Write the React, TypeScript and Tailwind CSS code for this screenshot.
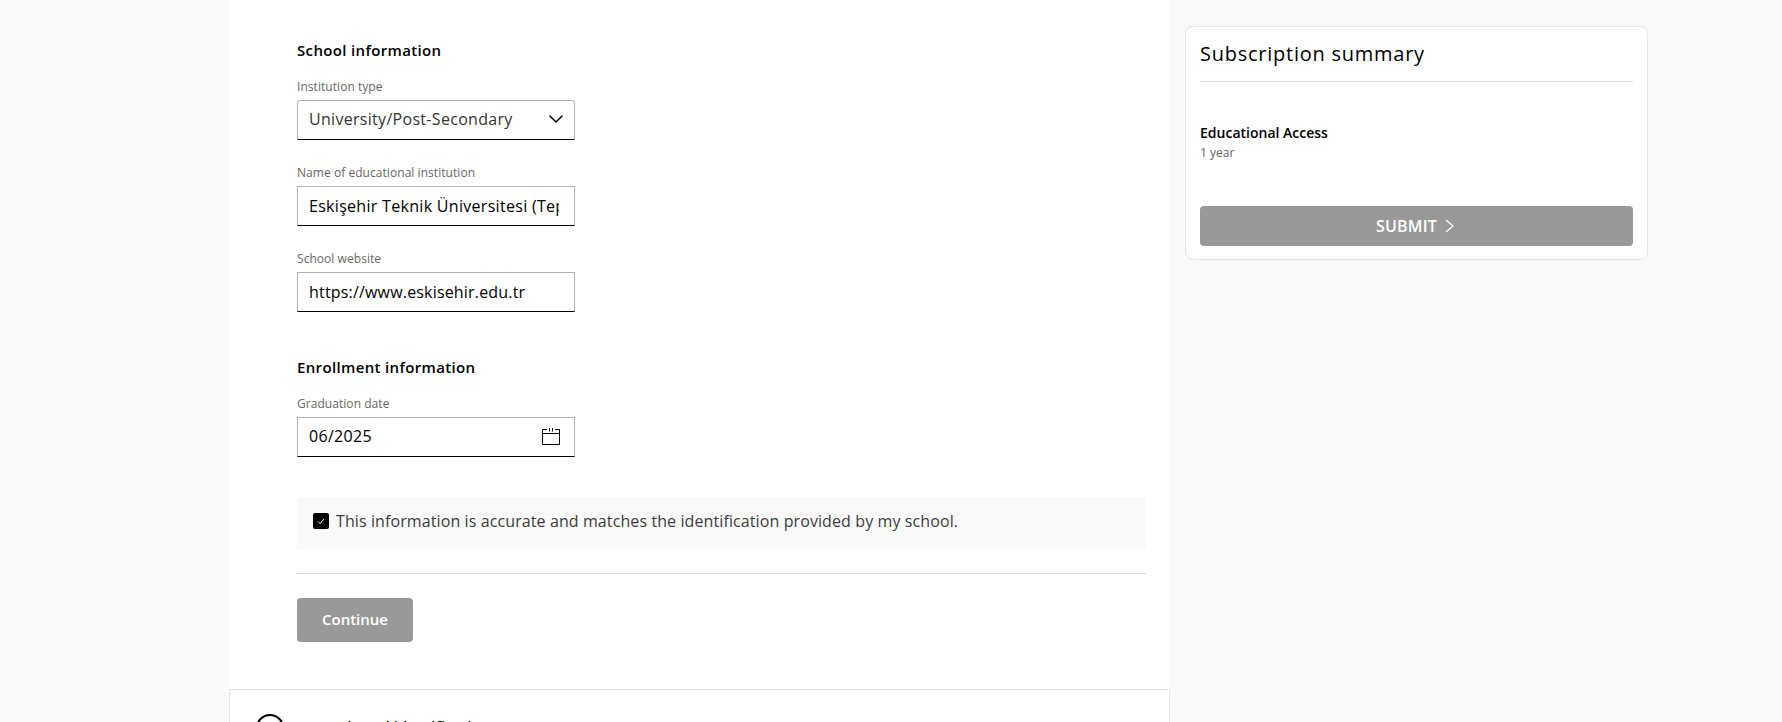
import { ChevronDown } from "lucide-react";

const inputBox =
  "flex h-10 w-[278px] items-center border border-[#b3b3b3] border-b-black bg-white pl-[11px] text-[16px] tracking-[0.3px]";

function Label({ children }: { children: React.ReactNode }) {
  return <div className="mb-[6px] h-[15px] text-[12px] leading-[15px] tracking-[0.05px] text-[#666666]">{children}</div>;
}

function SectionTitle({ children }: { children: React.ReactNode }) {
  return <h2 className="mb-[19px] text-[15px] leading-[20px] font-semibold tracking-[0.35px]">{children}</h2>;
}

function CalendarIcon() {
  return (
    <svg width="18" height="17" viewBox="0 0 18 17" fill="none" stroke="black" strokeWidth="1">
      <path d="M5 1.5H0.5V16.5H17.5V1.5H13" />
      <path d="M0.5 5.5H17.5" />
      <path d="M7.5 0V3.5M10.5 0V3.5" />
    </svg>
  );
}

export default function App() {
  return (
    <div className="flex h-[722px] gap-[15px] overflow-hidden bg-[#f9f9f9] pl-[229px] font-['Open_Sans','Noto_Sans',sans-serif] text-black">
      {/* Main form column */}
      <div className="flex w-[941px] flex-col">
        <div className="h-[689px] shrink-0 bg-white pl-[68px] pt-10">
          <SectionTitle>School information</SectionTitle>

          <Label>Institution type</Label>
          <div className={`${inputBox} mb-[25px] justify-between rounded-t-[3px] pb-[2px] pr-[6px] text-[#333333]`}>
            <span>University/Post-Secondary</span>
            <ChevronDown size={24} strokeWidth={1.5} className="text-black" />
          </div>

          <Label>Name of educational institution</Label>
          <div className={`${inputBox} mb-[25px]`}>
            <span className="w-[250px] overflow-hidden whitespace-nowrap">Eskişehir Teknik Üniversitesi (Tepebaşı)</span>
          </div>

          <Label>School website</Label>
          <div className={`${inputBox} mb-[45px] tracking-[0.18px]`}>https://www.eskisehir.edu.tr</div>

          <SectionTitle>Enrollment information</SectionTitle>

          <Label>Graduation date</Label>
          <div className={`${inputBox} mb-10 justify-between pb-[2px] pr-[14px]`}>
            <span>06/2025</span>
            <CalendarIcon />
          </div>

          <div className="flex h-[52px] w-[849px] items-center gap-[7px] bg-[#f9f9f9] pb-1 pl-4">
            <div className="flex h-4 w-4 items-center justify-center rounded-[2px] bg-black">
              <svg width="8" height="8" viewBox="0 0 8 8" fill="none" stroke="white" strokeWidth="1">
                <path d="M1 4.5L3 6.5L7 2" />
              </svg>
            </div>
            <span className="text-[16px] tracking-[0.1px] text-[#3c3c3c]">
              This information is accurate and matches the identification provided by my school.
            </span>
          </div>

          <div className="mt-6 w-[849px] border-t border-[#d9d9d9]" />

          <button className="mt-6 h-11 w-[116px] rounded-[4px] bg-[#999999] pb-[2px] text-[15px] font-semibold text-white">
            Continue
          </button>
        </div>

        <div className="flex flex-1 items-start gap-[13px] border-x border-t border-[#e5e5e5] bg-white pl-[26px] pt-6">
          <div className="h-7 w-7 shrink-0 rounded-full border-2 border-black" />
          <span className="mt-[2px] text-[15px] leading-[20px] font-semibold">Enter shared identification</span>
        </div>
      </div>

      {/* Summary column */}
      <div className="w-[463px] pt-[26px]">
        <div className="rounded-[8px] border border-[#e5e5e5] bg-white px-[14px] pb-[13px]">
          <div className="border-b border-[#d9d9d9] pb-[13px] pt-3 text-[20px] leading-[29px] font-medium tracking-[0.75px]">
            Subscription summary
          </div>
          <div className="mt-[42px] text-[14px] leading-[18px] font-semibold">Educational Access</div>
          <div className="mt-[3px] text-[12px] leading-[16px] text-[#666666]">1 year</div>
          <button className="mt-[45px] flex h-10 w-full items-center justify-center gap-2 rounded-[4px] bg-[#999999] pr-[3px] text-[16px] font-semibold tracking-[0.2px] text-white">
            SUBMIT
            <svg width="9" height="14" viewBox="0 0 9 14" fill="none" stroke="white" strokeWidth="1.2">
              <path d="M1 1L8 7L1 13" />
            </svg>
          </button>
        </div>
      </div>
    </div>
  );
}
